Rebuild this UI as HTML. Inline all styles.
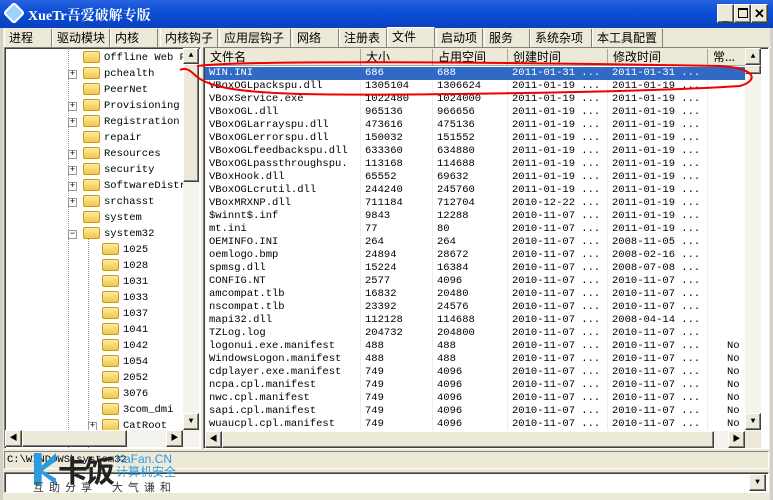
<!DOCTYPE html>
<html><head><meta charset="utf-8"><style>
*{margin:0;padding:0;box-sizing:border-box}
body{width:773px;height:500px;background:#ece9d8;position:relative;overflow:hidden;font-family:"Liberation Mono","Noto Sans CJK SC",monospace;font-size:10px;color:#000}
.a{position:absolute}
.title{left:0;top:0;width:773px;height:28px;background:linear-gradient(#2a63e0,#0b4fd6 40%,#0941c0);color:#fff;font:bold 14px "Liberation Serif","Noto Serif CJK SC",serif;}
.btn3d{background:#ece9d8;border:1px solid;border-color:#fff #404040 #404040 #fff;box-shadow:inset -1px -1px #808080}
.sunk{border:1px solid;border-color:#808080 #fff #fff #808080;box-shadow:inset 1px 1px #404040}
.tab{position:absolute;top:29px;height:18px;font:12px "Noto Sans CJK SC",sans-serif;line-height:17px;border-left:1px solid #fff;border-right:1px solid #808080;padding-left:4px;white-space:nowrap}
.row{position:absolute;left:205px;height:13px;width:540px;line-height:13px;white-space:nowrap;font-size:10.5px}
.row span{position:absolute;top:0}
.hd{position:absolute;top:49px;height:17px;font:12px "Noto Sans CJK SC",sans-serif;line-height:16px;padding-left:5px}
.ti{position:absolute;height:16px;line-height:16px;font-size:10.5px;white-space:nowrap}
.fold{display:inline-block;width:17px;height:12px;background:linear-gradient(#fde9a0,#f0c84a);border:1px solid #c99a20;border-radius:2px;vertical-align:middle;margin-right:4px}
.pl{position:absolute;width:9px;height:9px;border:1px solid #999;background:#fff;font-size:9px;line-height:7px;text-align:center}
</style></head><body>
<div class="a title"><div class="a" style="left:6px;top:5px;width:16px;height:16px;transform:rotate(45deg);background:#9cd4ff;border:2px solid #fff;border-radius:3px"></div><div class="a" style="left:28px;top:5px">XueTr吾爱破解专版</div>
<div class="a btn3d" style="left:717px;top:4px;width:17px;height:19px;font:bold 12px sans-serif;text-align:center;line-height:22px;color:#000">_</div>
<div class="a btn3d" style="left:734px;top:4px;width:17px;height:19px"><div class="a" style="left:3px;top:3px;width:10px;height:10px;border:1px solid #000;border-top-width:2px"></div></div>
<div class="a btn3d" style="left:751px;top:4px;width:17px;height:19px;color:#000;font:bold 13px sans-serif;text-align:center;line-height:17px">✕</div></div>
<div class="a" style="left:0;top:28px;width:773px;height:472px;border-left:3px solid #d4d0c8;border-right:3px solid #d4d0c8"></div>
<div class="tab" style="left:4px;width:48px">进程</div>
<div class="tab" style="left:52px;width:58px">驱动模块</div>
<div class="tab" style="left:110px;width:48px">内核</div>
<div class="tab" style="left:160px;width:58px">内核钩子</div>
<div class="tab" style="left:219px;width:72px">应用层钩子</div>
<div class="tab" style="left:292px;width:47px">网络</div>
<div class="tab" style="left:339px;width:48px">注册表</div>
<div class="tab" style="left:387px;top:27px;height:21px;width:48px;background:#ece9d8;border-top:1px solid #fff">文件</div>
<div class="tab" style="left:436px;width:47px">启动项</div>
<div class="tab" style="left:484px;width:46px">服务</div>
<div class="tab" style="left:530px;width:62px">系统杂项</div>
<div class="tab" style="left:592px;width:71px">本工具配置</div>
<div class="a" style="left:4px;top:47px;width:767px;height:1px;background:#fff"></div>
<!-- left tree -->
<div class="a sunk" style="left:4px;top:47px;width:197px;height:402px;background:#fff;overflow:hidden">
<div class="a" style="left:63px;top:0;height:400px;border-left:1px dotted #999"></div>
<div class="a" style="left:83px;top:188px;height:212px;border-left:1px dotted #999"></div>
</div>
<div class="a" style="left:5px;top:48px;width:178px;height:383px;overflow:hidden">
<div class="ti" style="left:78px;top:2px"><i class="fold"></i>Offline Web P:</div>
<div class="pl" style="left:63px;top:22px">+</div><div class="ti" style="left:78px;top:18px"><i class="fold"></i>pchealth</div>
<div class="ti" style="left:78px;top:34px"><i class="fold"></i>PeerNet</div>
<div class="pl" style="left:63px;top:54px">+</div><div class="ti" style="left:78px;top:50px"><i class="fold"></i>Provisioning</div>
<div class="pl" style="left:63px;top:70px">+</div><div class="ti" style="left:78px;top:66px"><i class="fold"></i>Registration</div>
<div class="ti" style="left:78px;top:82px"><i class="fold"></i>repair</div>
<div class="pl" style="left:63px;top:102px">+</div><div class="ti" style="left:78px;top:98px"><i class="fold"></i>Resources</div>
<div class="pl" style="left:63px;top:118px">+</div><div class="ti" style="left:78px;top:114px"><i class="fold"></i>security</div>
<div class="pl" style="left:63px;top:134px">+</div><div class="ti" style="left:78px;top:130px"><i class="fold"></i>SoftwareDistr:</div>
<div class="pl" style="left:63px;top:150px">+</div><div class="ti" style="left:78px;top:146px"><i class="fold"></i>srchasst</div>
<div class="ti" style="left:78px;top:162px"><i class="fold"></i>system</div>
<div class="pl" style="left:63px;top:182px">−</div><div class="ti" style="left:78px;top:178px"><i class="fold"></i>system32</div>
<div class="ti" style="left:97px;top:194px"><i class="fold"></i>1025</div>
<div class="ti" style="left:97px;top:210px"><i class="fold"></i>1028</div>
<div class="ti" style="left:97px;top:226px"><i class="fold"></i>1031</div>
<div class="ti" style="left:97px;top:242px"><i class="fold"></i>1033</div>
<div class="ti" style="left:97px;top:258px"><i class="fold"></i>1037</div>
<div class="ti" style="left:97px;top:274px"><i class="fold"></i>1041</div>
<div class="ti" style="left:97px;top:290px"><i class="fold"></i>1042</div>
<div class="ti" style="left:97px;top:306px"><i class="fold"></i>1054</div>
<div class="ti" style="left:97px;top:322px"><i class="fold"></i>2052</div>
<div class="ti" style="left:97px;top:338px"><i class="fold"></i>3076</div>
<div class="ti" style="left:97px;top:354px"><i class="fold"></i>3com_dmi</div>
<div class="pl" style="left:83px;top:374px">+</div><div class="ti" style="left:97px;top:370px"><i class="fold"></i>CatRoot</div>
</div>
<div class="a" style="left:183px;top:48px;width:16px;height:383px;background:#f4f3ee"></div>
<div class="a btn3d" style="left:183px;top:48px;width:16px;height:16px;font-size:8px;text-align:center;line-height:14px">▲</div>
<div class="a btn3d" style="left:183px;top:64px;width:16px;height:118px"></div>
<div class="a btn3d" style="left:183px;top:413px;width:16px;height:17px;font-size:8px;text-align:center;line-height:15px">▼</div>
<div class="a" style="left:5px;top:430px;width:194px;height:17px;background:#f4f3ee"></div>
<div class="a btn3d" style="left:5px;top:430px;width:17px;height:17px;font-size:8px;text-align:center;line-height:15px">◀</div>
<div class="a btn3d" style="left:22px;top:430px;width:105px;height:17px"></div>
<div class="a btn3d" style="left:166px;top:430px;width:17px;height:17px;font-size:8px;text-align:center;line-height:15px">▶</div>
<!-- right list -->
<div class="a sunk" style="left:203px;top:47px;width:566px;height:402px;background:#fff"></div>
<div class="a" style="left:205px;top:48px;width:540px;height:18px;background:#ece9d8;border-bottom:1px solid #aca899"></div>
<div class="hd" style="left:205px;width:156px;border-right:1px solid #aca899">文件名</div>
<div class="hd" style="left:361px;width:72px;border-right:1px solid #aca899">大小</div>
<div class="hd" style="left:433px;width:75px;border-right:1px solid #aca899">占用空间</div>
<div class="hd" style="left:508px;width:100px;border-right:1px solid #aca899">创建时间</div>
<div class="hd" style="left:608px;width:100px;border-right:1px solid #aca899">修改时间</div>
<div class="hd" style="left:708px;width:37px">常...</div>
<div class="a" style="left:360px;top:66px;width:1px;height:364px;background:#f0eee0"></div>
<div class="a" style="left:432px;top:66px;width:1px;height:364px;background:#f0eee0"></div>
<div class="a" style="left:507px;top:66px;width:1px;height:364px;background:#f0eee0"></div>
<div class="a" style="left:607px;top:66px;width:1px;height:364px;background:#f0eee0"></div>
<div class="a" style="left:707px;top:66px;width:1px;height:364px;background:#f0eee0"></div>
<div class="a" style="left:205px;top:67px;width:540px;height:13px;background:#316ac5"></div>
<div id="rows" class="a" style="left:0;top:0;width:773px;height:431px;overflow:hidden">
<div class="row" style="top:67px;color:#fff"><span style="left:4px">WIN.INI</span><span style="left:160px">686</span><span style="left:232px">688</span><span style="left:307px">2011-01-31 ...</span><span style="left:407px">2011-01-31 ...</span></div>
<div class="row" style="top:80px"><span style="left:4px">VBoxOGLpackspu.dll</span><span style="left:160px">1305104</span><span style="left:232px">1306624</span><span style="left:307px">2011-01-19 ...</span><span style="left:407px">2011-01-19 ...</span></div>
<div class="row" style="top:93px"><span style="left:4px">VBoxService.exe</span><span style="left:160px">1022480</span><span style="left:232px">1024000</span><span style="left:307px">2011-01-19 ...</span><span style="left:407px">2011-01-19 ...</span></div>
<div class="row" style="top:106px"><span style="left:4px">VBoxOGL.dll</span><span style="left:160px">965136</span><span style="left:232px">966656</span><span style="left:307px">2011-01-19 ...</span><span style="left:407px">2011-01-19 ...</span></div>
<div class="row" style="top:119px"><span style="left:4px">VBoxOGLarrayspu.dll</span><span style="left:160px">473616</span><span style="left:232px">475136</span><span style="left:307px">2011-01-19 ...</span><span style="left:407px">2011-01-19 ...</span></div>
<div class="row" style="top:132px"><span style="left:4px">VBoxOGLerrorspu.dll</span><span style="left:160px">150032</span><span style="left:232px">151552</span><span style="left:307px">2011-01-19 ...</span><span style="left:407px">2011-01-19 ...</span></div>
<div class="row" style="top:145px"><span style="left:4px">VBoxOGLfeedbackspu.dll</span><span style="left:160px">633360</span><span style="left:232px">634880</span><span style="left:307px">2011-01-19 ...</span><span style="left:407px">2011-01-19 ...</span></div>
<div class="row" style="top:158px"><span style="left:4px">VBoxOGLpassthroughspu.</span><span style="left:160px">113168</span><span style="left:232px">114688</span><span style="left:307px">2011-01-19 ...</span><span style="left:407px">2011-01-19 ...</span></div>
<div class="row" style="top:171px"><span style="left:4px">VBoxHook.dll</span><span style="left:160px">65552</span><span style="left:232px">69632</span><span style="left:307px">2011-01-19 ...</span><span style="left:407px">2011-01-19 ...</span></div>
<div class="row" style="top:184px"><span style="left:4px">VBoxOGLcrutil.dll</span><span style="left:160px">244240</span><span style="left:232px">245760</span><span style="left:307px">2011-01-19 ...</span><span style="left:407px">2011-01-19 ...</span></div>
<div class="row" style="top:197px"><span style="left:4px">VBoxMRXNP.dll</span><span style="left:160px">711184</span><span style="left:232px">712704</span><span style="left:307px">2010-12-22 ...</span><span style="left:407px">2011-01-19 ...</span></div>
<div class="row" style="top:210px"><span style="left:4px">$winnt$.inf</span><span style="left:160px">9843</span><span style="left:232px">12288</span><span style="left:307px">2010-11-07 ...</span><span style="left:407px">2011-01-19 ...</span></div>
<div class="row" style="top:223px"><span style="left:4px">mt.ini</span><span style="left:160px">77</span><span style="left:232px">80</span><span style="left:307px">2010-11-07 ...</span><span style="left:407px">2011-01-19 ...</span></div>
<div class="row" style="top:236px"><span style="left:4px">OEMINFO.INI</span><span style="left:160px">264</span><span style="left:232px">264</span><span style="left:307px">2010-11-07 ...</span><span style="left:407px">2008-11-05 ...</span></div>
<div class="row" style="top:249px"><span style="left:4px">oemlogo.bmp</span><span style="left:160px">24894</span><span style="left:232px">28672</span><span style="left:307px">2010-11-07 ...</span><span style="left:407px">2008-02-16 ...</span></div>
<div class="row" style="top:262px"><span style="left:4px">spmsg.dll</span><span style="left:160px">15224</span><span style="left:232px">16384</span><span style="left:307px">2010-11-07 ...</span><span style="left:407px">2008-07-08 ...</span></div>
<div class="row" style="top:275px"><span style="left:4px">CONFIG.NT</span><span style="left:160px">2577</span><span style="left:232px">4096</span><span style="left:307px">2010-11-07 ...</span><span style="left:407px">2010-11-07 ...</span></div>
<div class="row" style="top:288px"><span style="left:4px">amcompat.tlb</span><span style="left:160px">16832</span><span style="left:232px">20480</span><span style="left:307px">2010-11-07 ...</span><span style="left:407px">2010-11-07 ...</span></div>
<div class="row" style="top:301px"><span style="left:4px">nscompat.tlb</span><span style="left:160px">23392</span><span style="left:232px">24576</span><span style="left:307px">2010-11-07 ...</span><span style="left:407px">2010-11-07 ...</span></div>
<div class="row" style="top:314px"><span style="left:4px">mapi32.dll</span><span style="left:160px">112128</span><span style="left:232px">114688</span><span style="left:307px">2010-11-07 ...</span><span style="left:407px">2008-04-14 ...</span></div>
<div class="row" style="top:327px"><span style="left:4px">TZLog.log</span><span style="left:160px">204732</span><span style="left:232px">204800</span><span style="left:307px">2010-11-07 ...</span><span style="left:407px">2010-11-07 ...</span></div>
<div class="row" style="top:340px"><span style="left:4px">logonui.exe.manifest</span><span style="left:160px">488</span><span style="left:232px">488</span><span style="left:307px">2010-11-07 ...</span><span style="left:407px">2010-11-07 ...</span><span style="left:522px">No</span></div>
<div class="row" style="top:353px"><span style="left:4px">WindowsLogon.manifest</span><span style="left:160px">488</span><span style="left:232px">488</span><span style="left:307px">2010-11-07 ...</span><span style="left:407px">2010-11-07 ...</span><span style="left:522px">No</span></div>
<div class="row" style="top:366px"><span style="left:4px">cdplayer.exe.manifest</span><span style="left:160px">749</span><span style="left:232px">4096</span><span style="left:307px">2010-11-07 ...</span><span style="left:407px">2010-11-07 ...</span><span style="left:522px">No</span></div>
<div class="row" style="top:379px"><span style="left:4px">ncpa.cpl.manifest</span><span style="left:160px">749</span><span style="left:232px">4096</span><span style="left:307px">2010-11-07 ...</span><span style="left:407px">2010-11-07 ...</span><span style="left:522px">No</span></div>
<div class="row" style="top:392px"><span style="left:4px">nwc.cpl.manifest</span><span style="left:160px">749</span><span style="left:232px">4096</span><span style="left:307px">2010-11-07 ...</span><span style="left:407px">2010-11-07 ...</span><span style="left:522px">No</span></div>
<div class="row" style="top:405px"><span style="left:4px">sapi.cpl.manifest</span><span style="left:160px">749</span><span style="left:232px">4096</span><span style="left:307px">2010-11-07 ...</span><span style="left:407px">2010-11-07 ...</span><span style="left:522px">No</span></div>
<div class="row" style="top:418px"><span style="left:4px">wuaucpl.cpl.manifest</span><span style="left:160px">749</span><span style="left:232px">4096</span><span style="left:307px">2010-11-07 ...</span><span style="left:407px">2010-11-07 ...</span><span style="left:522px">No</span></div>
</div>
<div class="a" style="left:745px;top:48px;width:16px;height:383px;background:#f4f3ee"></div>
<div class="a btn3d" style="left:745px;top:48px;width:16px;height:17px;font-size:8px;text-align:center;line-height:15px">▲</div>
<div class="a btn3d" style="left:745px;top:65px;width:16px;height:9px"></div>
<div class="a btn3d" style="left:745px;top:413px;width:16px;height:17px;font-size:8px;text-align:center;line-height:15px">▼</div>
<div class="a" style="left:205px;top:431px;width:540px;height:17px;background:#f4f3ee"></div>
<div class="a btn3d" style="left:205px;top:431px;width:17px;height:17px;font-size:8px;text-align:center;line-height:15px">◀</div>
<div class="a btn3d" style="left:222px;top:431px;width:492px;height:17px"></div>
<div class="a btn3d" style="left:728px;top:431px;width:17px;height:17px;font-size:8px;text-align:center;line-height:15px">▶</div>
<div class="a" style="left:745px;top:431px;width:16px;height:17px;background:#ece9d8"></div>
<!-- status -->
<div class="a sunk" style="left:4px;top:451px;width:765px;height:18px;box-shadow:none;font-size:10.5px;line-height:16px;padding-left:2px">C:\WINDOWS\system32</div>
<div class="a sunk" style="left:4px;top:472px;width:765px;height:21px;background:#fff"></div>
<div class="a btn3d" style="left:749px;top:474px;width:17px;height:17px;font-size:8px;text-align:center;line-height:15px">▼</div>
<!-- logo -->
<div class="a" style="left:34px;top:453px;width:22px;height:32px;background:#2d9be0;clip-path:polygon(0 0,35% 0,35% 40%,100% 0,100% 25%,40% 55%,100% 80%,100% 100%,35% 65%,35% 100%,0 100%)"></div>
<div class="a" style="left:58px;top:449px;font:bold 30px 'Noto Sans CJK SC',sans-serif;color:#222;line-height:40px;letter-spacing:-3px">卡饭</div>
<div class="a" style="left:116px;top:452px;font:12px 'Liberation Sans',sans-serif;color:#2d9be0">KaFan.CN</div>
<div class="a" style="left:116px;top:465px;font:12px 'Noto Sans CJK SC',sans-serif;color:#2d9be0;line-height:14px">计算机安全</div>
<div class="a" style="left:33px;top:480px;font:11px 'Noto Sans CJK SC',sans-serif;color:#333;letter-spacing:5px;line-height:14px">互助分享 &nbsp;大气谦和</div>
<!-- red annotation -->
<svg class="a" style="left:0;top:0" width="773" height="500"><path d="M197 66 C240 60 500 62 720 66 C755 68 760 80 740 86 C650 92 400 96 300 94 C240 92 210 88 196 76 C190 70 185 67 180 70" fill="none" stroke="#e00" stroke-width="2"/></svg>
</body></html>
